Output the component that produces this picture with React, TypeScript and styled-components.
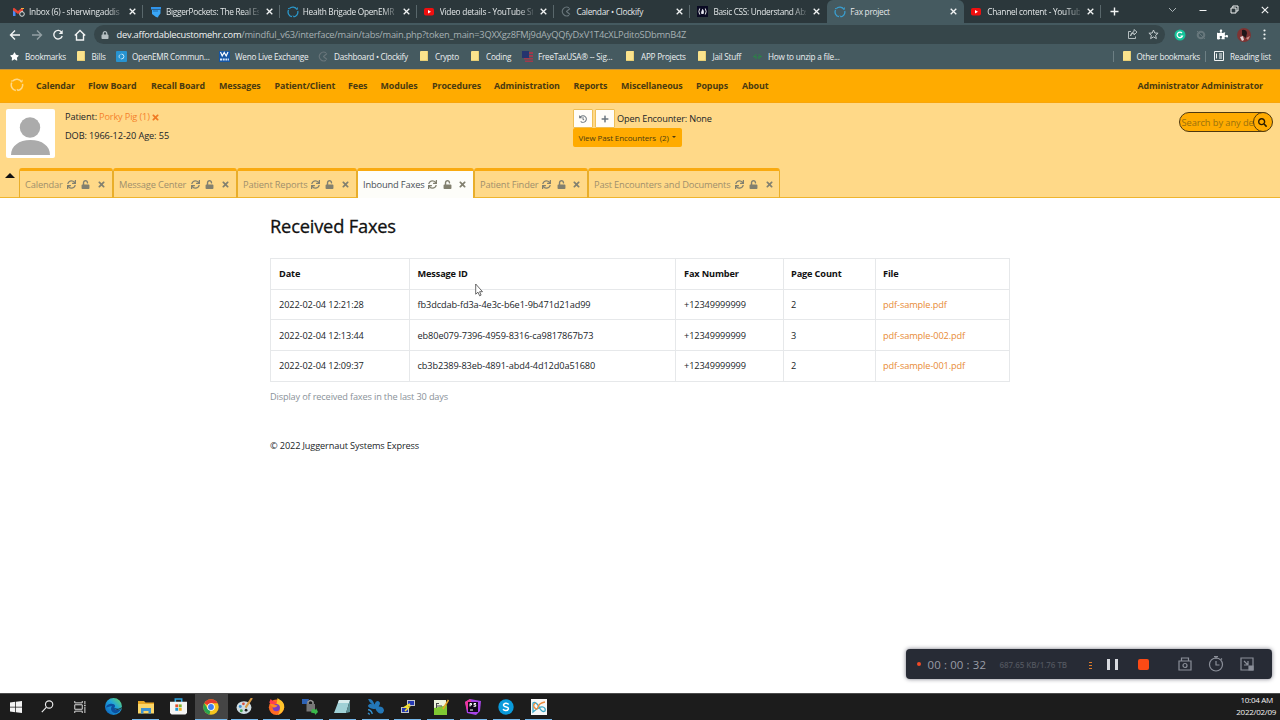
import React from "react";
import styled, { createGlobalStyle, css } from "styled-components";
import { FaHistory, FaPlus, FaSearch, FaSync, FaTimes, FaUnlock, FaStar, FaPuzzlePiece, FaLock } from "react-icons/fa";

const Global = createGlobalStyle`
  * { box-sizing: border-box; }
  html, body { margin: 0; overflow: hidden; }
  body { font-family: "Open Sans", "Noto Sans", sans-serif; font-size: 9.2px; color: #212529; background: #fff; }
  svg { display: block; flex: none; }
`;

const Screen = styled.div`
  width: 1280px;
  height: 720px;
  display: flex;
  flex-direction: column;
  position: relative;
  overflow: hidden;
`;

/* ---------- browser ---------- */
const TabStrip = styled.div`
  height: 23px;
  background: #2b373b;
  display: flex;
  padding-left: 6px;
  flex: none;
`;
const BrowserTab = styled.div<{ $active?: boolean; $sep?: boolean }>`
  width: 136.9px;
  height: 23px;
  padding: 0 7px 0 7px;
  display: flex;
  align-items: center;
  flex: none;
  color: #e4e8e9;
  font-size: 8.3px;
  ${(p) => p.$active && css`background: #455a60; border-radius: 6px 6px 0 0;`}
  ${(p) => p.$sep && css`
    background: linear-gradient(#59676b, #59676b) right center / 1px 13px no-repeat;
  `}
`;
const Favicon = styled.span`
  width: 16px;
  flex: none;
  display: flex;
`;
const TabTitle = styled.span<{ $ls?: number; $fade?: boolean }>`
  flex: 1;
  min-width: 0;
  white-space: nowrap;
  margin-right: 7px;
  letter-spacing: ${(p) => p.$ls ?? -0.28}px;
  ${(p) => p.$fade && css`mask-image: linear-gradient(90deg, #000 84%, transparent 104%);`}
`;
const StripEnd = styled.div`
  flex: 1;
  display: flex;
  align-items: center;
  padding-left: 9px;
`;
const WindowButtons = styled.div`
  margin-left: auto;
  display: flex;
  align-items: center;
  gap: 22.5px;
  padding: 0 11px 4px 0;
`;
const Toolbar = styled.div`
  height: 23px;
  background: #455a60;
  display: flex;
  align-items: center;
  flex: none;
  padding-left: 9px;
`;
const NavIcons = styled.div`
  display: flex;
  gap: 9.5px;
  width: 85px;
`;
const Address = styled.div`
  width: 1071px;
  height: 19px;
  border-radius: 10px;
  background: #36464a;
  display: flex;
  align-items: center;
  padding: 0 6px 0 7px;
  font-size: 9.3px;
  color: #a6b1b4;
`;
const Url = styled.span`
  margin-left: 7.5px;
  letter-spacing: -0.225px;
  flex: 1;
  white-space: nowrap;
  b { font-weight: 400; color: #f2f4f4; }
`;
const AddressIcons = styled.div`
  display: flex;
  gap: 10.5px;
`;
const Extensions = styled.div`
  display: flex;
  align-items: center;
  gap: 9.3px;
  margin-left: 9px;
  svg:last-child { margin-left: 3px; }
`;
const BookmarkBar = styled.div`
  height: 23px;
  background: #455a60;
  display: flex;
  align-items: center;
  flex: none;
  padding: 0 0 3px 10px;
`;
const Bookmark = styled.div<{ $w: number; $gap?: number }>`
  width: ${(p) => p.$w}px;
  display: flex;
  align-items: center;
  flex: none;
  gap: ${(p) => p.$gap ?? 6}px;
  font-size: 8.2px;
  letter-spacing: -0.25px;
  white-space: nowrap;
  color: #eceff0;
`;
const BookmarkEnd = styled.div`
  margin-left: auto;
  display: flex;
`;
const Divider = styled.span`
  width: 1px;
  height: 11px;
  background: #6d7f84;
  margin-right: 8px;
  align-self: center;
`;
const Folder = styled.span`
  width: 8px;
  height: 10px;
  margin: 0 1px;
  flex: none;
  border-radius: 1px;
  background: #fbe38c;
  box-shadow: inset -1px -1px 0 #e9cf74;
`;

/* ---------- application ---------- */
const MainNav = styled.nav`
  height: 34px;
  background: #ffab00;
  border-top: 1px solid #c8953a;
  border-bottom: 1px solid #f9a50a;
  display: flex;
  align-items: center;
  flex: none;
  padding: 0 0 1.5px 10px;
  font-weight: 700;
  font-size: 8.9px;
  color: #4a3a10;
`;
const NavItem = styled.span<{ $w: number }>`
  width: ${(p) => p.$w}px;
  letter-spacing: -0.1px;
  white-space: nowrap;
`;
const UserName = styled.span`
  margin-left: auto;
  margin-right: 17px;
  letter-spacing: -0.08px;
`;
const PatientHeader = styled.header`
  height: 65px;
  background: #ffd988;
  display: flex;
  flex: none;
  padding: 6px 8px 0 6px;
`;
const Avatar = styled.div`
  width: 49px;
  height: 49px;
  flex: none;
  background: #fff;
  border-radius: 2px;
`;
const PatientInfo = styled.div`
  width: 517.5px;
  flex: none;
  padding: 1px 0 0 10px;
  font-size: 9.2px;
  letter-spacing: -0.09px;
  div { height: 19px; line-height: 14px; display: flex; align-items: center; padding-bottom: 5px; }
  a { color: #f5822b; margin: 0 1.5px 0 2px; letter-spacing: -0.14px; }
`;
const Encounter = styled.div`
  width: 606px;
  flex: none;
`;
const EncounterRow = styled.div`
  display: flex;
  align-items: center;
  font-size: 9.2px;
  letter-spacing: -0.17px;
`;
const SquareButton = styled.span`
  width: 20px;
  height: 19px;
  margin-right: 2.3px;
  background: #fffdf8;
  border: 1px solid #efbf55;
  border-radius: 1px;
  display: flex;
  align-items: center;
  justify-content: center;
  color: #6c757d;
`;
const PastButton = styled.span`
  width: 109px;
  height: 19px;
  background: #ffab00;
  border-radius: 2px;
  display: flex;
  align-items: center;
  padding: 0 0 1px 6px;
  font-size: 8px;
  letter-spacing: -0.12px;
  color: #4d3b10;
  white-space: pre;
`;
const Caret = styled.i`
  border: 2px solid transparent;
  border-top-color: #4d3b10;
  border-bottom: 0;
  margin-left: 3px;
`;
const SearchBox = styled.div`
  width: 93px;
  height: 20px;
  flex: none;
  margin-top: 3px;
  border: 1px solid #4d3810;
  border-radius: 10px;
  background: #ffab00;
  display: flex;
  align-items: center;
  font-size: 9.3px;
  color: #98700e;
  white-space: nowrap;
  padding-left: 2px;
  span { width: 71px; letter-spacing: -0.08px; }
`;
const SearchButton = styled.div`
  width: 20px;
  height: 20px;
  border: 1px solid #4d3810;
  border-radius: 50%;
  background: #ffab00;
  color: #2a1d00;
  display: flex;
  align-items: center;
  justify-content: center;
  flex: none;
`;
const AppTabs = styled.div`
  height: 30px;
  background: #ffd988;
  display: flex;
  flex: none;
  box-shadow: inset 0 -1px 0 #efb52e;
`;
const CollapseCell = styled.div`
  width: 19px;
  padding: 5px 0 0 5px;
`;
const AppTab = styled.div<{ $w: number; $active?: boolean }>`
  width: ${(p) => p.$w}px;
  height: 30px;
  border-top: 3px solid #f9aa10;
  border-right: 1px solid #e9ae2a;
  border-left: 1px solid #e9ae2a;
  border-radius: 3px 3px 0 0;
  display: flex;
  align-items: center;
  padding: 0 0 1px 5px;
  font-size: 9.3px;
  white-space: nowrap;
  color: ${(p) => (p.$active ? "#495057" : "#a08f6c")};
  background: ${(p) => (p.$active ? "#fdfdf9" : "transparent")};
`;
const AppTabTitle = styled.span<{ $w: number }>`
  width: ${(p) => p.$w}px;
  letter-spacing: -0.16px;
`;
const AppTabIcons = styled.span`
  display: flex;
  align-items: center;
  color: #82806f;
  gap: 5.5px;
  svg:last-child { margin-left: 1px; }
`;
const Content = styled.main`
  width: 740px;
  margin: 0 auto;
  flex: 1;
`;
const Title = styled.h2`
  margin: 14px 0 19px;
  font-size: 18.3px;
  line-height: 27px;
  font-weight: 500;
  letter-spacing: -0.2px;
  color: #111;
  -webkit-text-stroke: 0.3px #111;
`;
const Table = styled.table`
  width: 740px;
  border-collapse: collapse;
  table-layout: fixed;
  th, td { border: 1px solid #e6e8ea; height: 30.67px; padding: 0 8px; text-align: left; font-size: 9.2px; }
  th { color: #111; letter-spacing: -0.14px; }
  th:nth-child(n + 4), td:nth-child(n + 4) { padding-left: 7.5px; }
`;
const DateCol = styled.col`width: 138.500px;`;
const IdCol = styled.col`width: 266.500px;`;
const NumberCol = styled.col`width: 107.500px;`;
const PagesCol = styled.col`width: 92px;`;
const Cell = styled.td`
  letter-spacing: -0.1px;
`;
const FileLink = styled.a`
  color: #e88b35;
`;
const Note = styled.p`
  margin: 8px 0 36px;
  line-height: 13px;
  letter-spacing: -0.15px;
  color: #8a9299;
`;
const Copyright = styled.p`
  margin: 0;
  line-height: 13px;
  letter-spacing: -0.13px;
`;

/* ---------- desktop ---------- */
const Taskbar = styled.footer`
  height: 27px;
  background: #1c1c1c;
  border-top: 1px solid #4c4c4c;
  display: flex;
  flex: none;
`;
const TaskCell = styled.div<{ $first?: boolean; $open?: boolean; $active?: boolean }>`
  width: ${(p) => (p.$first ? 31.3 : 32.76)}px;
  height: 26px;
  display: flex;
  align-items: center;
  justify-content: center;
  border-bottom: 1px solid transparent;
  background:
    ${(p) => (p.$open ? `linear-gradient(#76b9ed, #76b9ed) center bottom / ${p.$active ? 32 : 27}px 1px no-repeat border-box,` : "")}
    ${(p) => (p.$active ? "#454545" : "transparent")};
`;
const Clock = styled.div`
  margin-left: auto;
  width: 54px;
  padding: 0 4px 0 0;
  text-align: right;
  font-size: 8px;
  line-height: 12px;
  letter-spacing: -0.28px;
  color: #f1f1f1;
  div:first-child { padding-right: 3px; }
`;
const Recorder = styled.div`
  position: absolute;
  left: 906px;
  top: 649px;
  width: 366px;
  height: 30px;
  border-radius: 4px;
  background: #272b35;
  box-shadow: 0 0 4px rgba(30, 30, 50, 0.6);
  display: flex;
  align-items: center;
  padding-left: 11px;
  color: #9a9da6;
`;
const RecDot = styled.i`
  width: 4px;
  height: 4px;
  border-radius: 50%;
  background: #f24a26;
  margin-right: 6.5px;
`;
const RecTime = styled.span`
  width: 72px;
  font-size: 11.4px;
  letter-spacing: 0.15px;
  white-space: nowrap;
`;
const RecSize = styled.span`
  width: 89px;
  font-size: 8px;
  font-weight: 600;
  letter-spacing: -0.05px;
  color: #50545d;
  white-space: nowrap;
`;
const Levels = styled.i`
  width: 3px;
  height: 8px;
  margin: 3px 15px 0 0;
  background: repeating-linear-gradient(#e07b2a 0 1px, transparent 1px 3px);
`;
const Pause = styled.i`
  width: 11px;
  height: 11px;
  border: solid #d9dbe0;
  border-width: 0 3px;
  margin-right: 20px;
`;
const Stop = styled.i`
  width: 11px;
  height: 11px;
  border-radius: 2px;
  background: #fc4a15;
  margin-right: 28px;
`;
const RecIcons = styled.div`
  display: flex;
  gap: 15px;
`;
const Pointer = styled.svg`
  position: absolute;
  left: 475px;
  top: 283px;
`;

/* ---------- icons ---------- */
const Gmail = () => (
  <svg width="12" height="10" viewBox="0 0 12 10">
    <path d="M0 1.5V9h2.500V4z" fill="#4a8af4" /><path d="M7.500 4v5H10V1.500z" fill="#c5c8c8" />
    <path d="M0 1.500L1 .8 5 4 9 .8l1 .7v2L5 7 0 3.500z" fill="#e74435" />
    <circle cx="9" cy="7" r="2.300" fill="#2b373b" stroke="#d9dede" /><path d="M8 1.500h3" stroke="#f4ab40" />
  </svg>
);
const Pockets = () => (
  <svg width="12" height="12" viewBox="0 0 12 12"><path d="M1 1h10v2.500H1z" fill="#2f93ea" /><path d="M2 4h8.500v3.500L8.500 10 8 11.500 6 11 2 8z" fill="#3aa6f6" /><path d="M3 5h5" stroke="#1b6bb0" /></svg>
);
const Ring = ({ size = 12, color = "#2b98cb" }: { size?: number; color?: string }) => (
  <svg width={size} height={size} viewBox="0 0 12 12" fill="none" stroke={color} strokeWidth="1.300">
    <path d="M2.300 2.600A4.800 4.800 0 0 1 10 3.500" /><path d="M10.800 5A4.800 4.800 0 0 1 6.600 10.800" /><path d="M5 10.700A4.800 4.800 0 0 1 1.500 4" />
    <path d="M10.500 1.500L10 3.800M1 2.500l1.300.3M6 9.500l.8 1.300" strokeWidth="1" />
  </svg>
);
const Youtube = () => (
  <svg width="11" height="10" viewBox="0 0 11 10"><rect y="1" width="10" height="7.500" rx="1.800" fill="#f00f0f" /><path d="M4 3l3 1.700-3 1.700z" fill="#fff" /></svg>
);
const Clockify = () => (
  <svg width="11" height="11" viewBox="0 0 11 11" fill="none" stroke="#68757a" strokeWidth="1.100"><path d="M8 1.700A4.400 4.400 0 1 0 8 9.300" /><path d="M5.500 5.500L9 2.500M5.500 5.500L9 8.500M5 5.500h1.500" /></svg>
);
const CampIcon = () => (
  <svg width="11" height="11" viewBox="0 0 11 11"><rect width="11" height="11" fill="#0a0a23" /><path d="M2.700 2.500q-1.700 3 0 6M8.300 2.500q1.700 3 0 6" stroke="#fff" fill="none" strokeWidth=".9" /><path d="M5.500 2.800C7.500 5 7 7 6.500 8h-2C3.500 6.500 4.500 5.500 5.500 2.800z" fill="#e5e5ee" /></svg>
);
const Cross = ({ s = 7, w = 1.3, c = "#f2f4f4" }) => (
  <svg width={s} height={s} viewBox="0 0 7 7"><path d="M.7.7l5.600 5.600M6.300.7L.7 6.300" stroke={c} strokeWidth={w} /></svg>
);
const line = { fill: "none", stroke: "#f2f4f4", strokeWidth: 1.4 };

const tabs: { icon: React.ReactNode; title: string; sep?: boolean; active?: boolean; fade?: boolean; ls?: number }[] = [
  { icon: <Gmail />, title: "Inbox (6) - sherwingaddis", sep: true, fade: true, ls: -0.25 },
  { icon: <Pockets />, title: "BiggerPockets: The Real Es", sep: true, fade: true, ls: -0.3 },
  { icon: <Ring />, title: "Health Brigade OpenEMR", sep: true, fade: true, ls: -0.3 },
  { icon: <Youtube />, title: "Video details - YouTube St", sep: true, fade: true, ls: -0.22 },
  { icon: <Clockify />, title: "Calendar • Clockify", sep: true },
  { icon: <CampIcon />, title: "Basic CSS: Understand Abs", fade: true, ls: -0.32 },
  { icon: <Ring color="#3a9fd0" />, title: "Fax project", active: true },
  { icon: <Youtube />, title: "Channel content - YouTub", sep: true, fade: true, ls: -0.28 },
];

const marks: { w: number; label: string; icon: React.ReactNode; gap?: number }[] = [
  { w: 66, label: "Bookmarks", icon: <FaStar size={9} color="#fff" />, gap: 6 },
  { w: 40, label: "Bills", icon: <Folder />, gap: 5.5 },
  { w: 103, label: "OpenEMR Commun...", gap: 5,
    icon: <svg width="11" height="11" viewBox="0 0 11 11"><rect width="11" height="11" rx="1" fill="#2793d0" /><circle cx="5.500" cy="5.500" r="2.400" fill="none" stroke="#c9e8f8" strokeDasharray="4 1" /></svg> },
  { w: 99, label: "Weno Live Exchange", gap: 5,
    icon: <svg width="11" height="11" viewBox="0 0 11 11"><rect width="11" height="11" fill="#1656a4" /><path d="M1.500 1l1.700 4 2-3.500 2 3.500L9 1" fill="none" stroke="#fff" strokeWidth="1.200" /><path d="M1 8.500h9" stroke="#d8e8ff" strokeWidth="2" strokeDasharray="2 .7" /></svg> },
  { w: 101, label: "Dashboard • Clockify", icon: <Clockify />, gap: 5 },
  { w: 51, label: "Crypto", icon: <Folder /> },
  { w: 52, label: "Coding", icon: <Folder /> },
  { w: 103, label: "FreeTaxUSA® -- Sig...", gap: 5,
    icon: <svg width="11" height="11" viewBox="0 0 11 11"><path d="M0 0h7v7H0z" fill="#25346e" /><path d="M7 1h4v2H7zM7 4h4v2H7zM2 7h9v1.500H2zM3 9.500h8V11H3z" fill="#a0394c" /></svg> },
  { w: 71.5, label: "APP Projects", icon: <Folder /> },
  { w: 55.5, label: "Jail Stuff", icon: <Folder /> },
  { w: 100, label: "How to unzip a file...", gap: 5,
    icon: <svg width="11" height="7" viewBox="0 0 11 7" fill="none" stroke="#2f7d4a"><path d="M4.500 1.500a2 2 0 1 0 0 4V3.500H1M6.500 1.500a2 2 0 1 1 0 4V3.500H10" /></svg> },
];

const nav: [string, number][] = [
  ["Calendar", 52], ["Flow Board", 63], ["Recall Board", 68], ["Messages", 55.5], ["Patient/Client", 73.5],
  ["Fees", 32.5], ["Modules", 51.5], ["Procedures", 62], ["Administration", 79.5], ["Reports", 47.5],
  ["Miscellaneous", 75], ["Popups", 46], ["About", 40],
];

const appTabs: { label: string; w: number; t: number; active?: boolean }[] = [
  { label: "Calendar", w: 94, t: 41.5 },
  { label: "Message Center", w: 124, t: 71.5 },
  { label: "Patient Reports", w: 120, t: 67.5 },
  { label: "Inbound Faxes", w: 117, t: 65, active: true },
  { label: "Patient Finder", w: 114, t: 62 },
  { label: "Past Encounters and Documents", w: 192, t: 140.5 },
];

const faxes = [
  ["2022-02-04 12:21:28", "fb3dcdab-fd3a-4e3c-b6e1-9b471d21ad99", "+12349999999", "2", "pdf-sample.pdf"],
  ["2022-02-04 12:13:44", "eb80e079-7396-4959-8316-ca9817867b73", "+12349999999", "3", "pdf-sample-002.pdf"],
  ["2022-02-04 12:09:37", "cb3b2389-83eb-4891-abd4-4d12d0a51680", "+12349999999", "2", "pdf-sample-001.pdf"],
];

const V = ({ s = 16, children }: { s?: number; children: React.ReactNode }) => (
  <svg width={s} height={s} viewBox="0 0 16 16">{children}</svg>
);

const tasks: { icon: React.ReactNode; open?: boolean; active?: boolean }[] = [
  { icon: <V s={12}><path d="M0 2l7-1v6.500H0zM8 .9L16 0v7.500H8zM0 8.500h7V15l-7-1zM8 8.500h8V16l-8-1z" fill="#f3f3f3" /></V> },
  { icon: <V s={13}><g fill="none" stroke="#eee" strokeWidth="1.400"><circle cx="10" cy="5.500" r="4.500" /><path d="M6.500 9L1 15" /></g></V> },
  { icon: <V s={12}><g fill="none" stroke="#ddd" strokeWidth="1.300"><path d="M1 0v2.500h10V0M1 16v-2.500h10V16M1 5h10v6H1zM14.500 0v4M14.500 8v8" /><path d="M13.500 6h2" strokeWidth="2" /></g></V> },
  { icon: <V s={17}><defs><linearGradient id="edge" x1="0" y1="1" x2="1" y2="0"><stop offset="0" stopColor="#0b5cb8" /><stop offset=".55" stopColor="#1fa4df" /><stop offset="1" stopColor="#6ddc5a" /></linearGradient></defs><circle cx="8" cy="8" r="8" fill="url(#edge)" /><path d="M1 9c.5-4 8-5 8.500-1.500C9 9 8.500 9 9 10c1 1.500 4 1.500 6.300 0-1.300 3-4.300 4.500-6.300 4.200C5.500 13 5 10 6.500 7.500" fill="#0c4f9e" /><path d="M8.500 9.500c2 2.500 5 1.500 7 .2L16 8c0-1 0-1 0 0-1 2-5 3-7.500 1.500z" fill="#1c1c1c" /></V> },
  { icon: <V><path d="M0 2h6l1.500 1.500H16V14H0z" fill="#e9a825" /><path d="M0 5h16v9.500H0z" fill="#fbd668" /><path d="M3 9h10v5.500h-2.500V12h-5v2.500H3z" fill="#3f93d2" /></V>, open: true },
  { icon: <V s={17}><path d="M5 4V1h6v3" fill="none" stroke="#2ba4e0" strokeWidth="1.500" /><path d="M0 3.500h16V14l-1.500 1.500h-13L0 14z" fill="#f4f4f4" /><path d="M5 6h2.700v2.700H5z" fill="#e8502a" /><path d="M8.300 6H11v2.700H8.300z" fill="#7db52a" /><path d="M5 9.300h2.700V12H5z" fill="#1b98d8" /><path d="M8.300 9.300H11V12H8.300z" fill="#f3ae1b" /></V> },
  { icon: <V><circle cx="8" cy="8" r="7.700" fill="#f6c41c" /><path d="M8 8L1.300 4.200A7.700 7.700 0 0 1 14.700 4.200H8z" fill="#e33b2e" /><path d="M8 8l-1.500 7.600A7.700 7.700 0 0 1 1.300 4.200l3.500 5.700z" fill="#2aa44f" /><circle cx="8" cy="8" r="3.800" fill="#fff" /><circle cx="8" cy="8" r="2.900" fill="#3d7ff0" /></V>, open: true, active: true },
  { icon: <V s={17}><ellipse cx="7.500" cy="9" rx="7" ry="6" fill="#cfdce2" /><circle cx="4" cy="8" r="1.400" fill="#3c8fd0" /><circle cx="7" cy="5.500" r="1.300" fill="#d84d3a" /><circle cx="5" cy="12" r="1.400" fill="#45a552" /><circle cx="9.500" cy="11.500" r="1.300" fill="#1c1c1c" /><path d="M15 0L9 9" stroke="#d89a43" strokeWidth="2" /></V>, open: true },
  { icon: <V s={17}><circle cx="8" cy="8.700" r="7.200" fill="#ff6b22" /><path d="M9 0c2 2 6.500 3 6.300 8.500C15 12 12 15 9 16c4-5 2-9-1-10z" fill="#ffc32b" /><path d="M1 4c1-1 1-2 1.500-3C4 3 6 3 8 4.500L5 7z" fill="#ff3f50" /><circle cx="7.800" cy="9" r="3.400" fill="#7a3cc8" /><path d="M2 6c3-1 5 1 7 1-1 2-3 2-4 2z" fill="#ff8c22" /></V>, open: true },
  { icon: <V><path d="M0 0h7l-2 5H0z" fill="#2d62b5" /><path d="M6 6V3q2.500-3 5 0v3" stroke="#999" fill="none" strokeWidth="1.500" /><path d="M4.500 5h8.500v7.500H4.500z" fill="#767676" /><path d="M10 10l4 .5V9l2 4-3 3v-1.500l-4-1z" fill="#3ab84a" /></V>, open: true },
  { icon: <V><path d="M5 1h11l-4 13H0z" fill="#9fd0d6" /><path d="M5 1h11l-1 3H4z" fill="#d8ecee" /><path d="M12 14l4-13v12z" fill="#5d9299" /></V>, open: true },
  { icon: <V s={17}><path d="M1 1q4-1 6 5 2-5 5-2 1 2-1 4 5 0 5 4-1 4-5 2-2-1-3-4-3 1-6-1-2-2 0-3 1-1 3 0Q2 4 1 1z" fill="#2377b8" /><path d="M1 11q3 0 4 4M1 14l1.500 1.500" stroke="#3796d6" fill="none" strokeWidth="1.300" /></V>, open: true },
  { icon: <V><rect x="7" y="1" width="8" height="6" fill="#c2c6cc" /><rect x="8" y="2" width="6" height="4" fill="#2438b4" /><rect x="1" y="8" width="8" height="6" fill="#c2c6cc" /><rect x="2" y="9" width="6" height="4" fill="#2438b4" /><path d="M10 5L5 8l4 0-4 4" fill="none" stroke="#f4e02a" strokeWidth="1.500" /></V>, open: true },
  { icon: <V><path d="M1 1h12v15H1z" fill="#eef4dd" /><path d="M1 9q6-1 13-3v10H1z" fill="#7fc832" /><path d="M3 4.500h3M3 7h6M3.500 4v5" stroke="#444" /><path d="M15.500 1L10 10" stroke="#e3a528" strokeWidth="1.700" /></V>, open: true },
  { icon: <V><path d="M0 3l5-3 11 2-1 10-4 4-9-2z" fill="#a844e8" /><path d="M0 3l5-3 2 5-5 6z" fill="#f0369b" /><path d="M3 3h10v10H3z" fill="#100818" /><path d="M5 7.500v-3h1.500v1.500H5M11 4.500H9v1.300h1.700v1.500H8.500M5 11h3" fill="none" stroke="#fff" /></V>, open: true },
  { icon: <V><circle cx="8" cy="8" r="7.700" fill="#0a9bdc" /><path d="M10.700 5.500Q9.500 4 7.500 4.300 5.300 5 5.600 6.500 6 7.600 8.300 8q2.500.5 2 2.200-.8 1.600-2.800 1.400-1.700-.2-2.400-1.600" fill="none" stroke="#fff" strokeWidth="1.500" /></V>, open: true },
  { icon: <V><rect width="16" height="16" fill="#f7f7f7" /><path d="M2 4q3-2 6 4t6 4q1-3-2-4T2 13z" fill="none" stroke="#38a7c7" strokeWidth="1.300" /><path d="M14 3q-6 1-7 5T3 8q-1-3 2-4" fill="none" stroke="#ed8b3b" strokeWidth="1.300" /></V>, open: true },
];

export default function App() {
  return (
    <Screen>
      <Global />
      <TabStrip>
        {tabs.map((t) => (
          <BrowserTab key={t.title} $active={t.active} $sep={t.sep}>
            <Favicon>{t.icon}</Favicon>
            <TabTitle $fade={t.fade} $ls={t.ls}>{t.title}</TabTitle>
            <Cross />
          </BrowserTab>
        ))}
        <StripEnd>
          <svg width="9" height="9" viewBox="0 0 9 9"><path d="M4.500.5v8M.5 4.500h8" {...line} /></svg>
          <WindowButtons>
            <svg width="9" height="6" viewBox="0 0 9 6"><path d="M1 1l3.500 3.500L8 1" {...line} strokeWidth=".9" stroke="#b9c2c4" /></svg>
            <svg width="8" height="8" viewBox="0 0 8 8"><path d="M.5 4.500h7" {...line} strokeWidth="1" /></svg>
            <svg width="9" height="9" viewBox="0 0 9 9"><path d="M1 3h5v5H1zM2.800 2.800V1H8v5H6.200" {...line} strokeWidth="1" /></svg>
            <Cross s={8} w={1} />
          </WindowButtons>
        </StripEnd>
      </TabStrip>
      <Toolbar>
        <NavIcons>
          <svg width="12" height="12" viewBox="0 0 12 12"><path d="M11 6H1.500M6 1.500L1.500 6 6 10.500" {...line} /></svg>
          <svg width="12" height="12" viewBox="0 0 12 12"><path d="M1 6h9.500M6 1.500L10.500 6 6 10.500" {...line} stroke="#93a0a4" /></svg>
          <svg width="12" height="12" viewBox="0 0 12 12"><path d="M9.700 3.300A4.300 4.300 0 1 0 10.200 7" {...line} /><path d="M10.700 1v4h-4z" fill="#f2f4f4" /></svg>
          <svg width="12" height="12" viewBox="0 0 12 12"><path d="M.8 6.500L6 1.500l5.200 5M2.500 5.500V11h7V5.500" {...line} /></svg>
        </NavIcons>
        <Address>
          <FaLock size={8} color="#b5bfc2" />
          <Url><b>dev.affordablecustomehr.com</b>/mindful_v63/interface/main/tabs/main.php?token_main=3QXXgz8FMj9dAyQQfyDxV1T4cXLPditoSDbmnB4Z</Url>
          <AddressIcons>
            <svg width="11" height="11" viewBox="0 0 11 11"><path d="M4 2.500H1.500V9.500H8.500V7.500M3.500 7Q4 4 7 4V6l3-3-3-2.500V2.500Q4 3 3.500 7z" {...line} strokeWidth=".9" stroke="#c3cbcd" /></svg>
            <svg width="11" height="11" viewBox="0 0 11 11"><path d="M5.500 1l1.300 3 3.300.2L7.600 6.400l.8 3.200-2.900-1.700-2.900 1.700.8-3.200L.9 4.200 4.200 4z" {...line} strokeWidth="1" stroke="#c3cbcd" /></svg>
          </AddressIcons>
        </Address>
        <Extensions>
          <svg width="12" height="12" viewBox="0 0 12 12"><circle cx="6" cy="6" r="5.500" fill="#15c39a" /><path d="M8 4A2.800 2.800 0 1 0 8.500 7H6.500" fill="none" stroke="#fff" strokeWidth="1.200" /></svg>
          <svg width="12" height="12" viewBox="0 0 12 12"><circle cx="6" cy="6" r="3.300" fill="none" stroke="#67777c" strokeWidth="2" /><path d="M2 2l8 8" stroke="#67777c" /></svg>
          <FaPuzzlePiece size={11} color="#fff" />
          <svg width="14" height="14" viewBox="0 0 14 14"><circle cx="7" cy="7" r="7" fill="#7e3433" /><path d="M5 2q4-1 5 3l-1 5-4-3z" fill="#1f1719" /><path d="M3 9l3-1 1 4-2 1z" fill="#e9d6d6" /><path d="M9 10l4-2-2 4z" fill="#c98c84" /></svg>
          <svg width="4" height="11" viewBox="0 0 4 11" fill="#f2f4f4"><circle cx="1.500" cy="1.500" r="1.100" /><circle cx="1.500" cy="5.500" r="1.100" /><circle cx="1.500" cy="9.500" r="1.100" /></svg>
        </Extensions>
      </Toolbar>
      <BookmarkBar>
        {marks.map((m) => (
          <Bookmark key={m.label} $w={m.w} $gap={m.gap}>{m.icon}{m.label}</Bookmark>
        ))}
        <BookmarkEnd>
          <Divider />
          <Bookmark $w={83} $gap={4.5}><Folder />Other bookmarks</Bookmark>
          <Divider />
          <Bookmark $w={66} $gap={6}>
            <svg width="10" height="10" viewBox="0 0 10 10"><path d="M.5.5h9v9h-9z" {...line} strokeWidth="1" /><path d="M2.500 2.500v5M5 3h3M5 5h3M5 7h3" {...line} strokeWidth="1" /></svg>
            Reading list
          </Bookmark>
        </BookmarkEnd>
      </BookmarkBar>
      <MainNav>
        <NavItem $w={26}><Ring size={14} color="#ffd988" /></NavItem>
        {nav.map(([label, w]) => <NavItem key={label} $w={w}>{label}</NavItem>)}
        <UserName>Administrator Administrator</UserName>
      </MainNav>
      <PatientHeader>
        <Avatar>
          <svg width="49" height="49" viewBox="0 0 49 49" fill="#ababab"><circle cx="24" cy="18.500" r="10.200" /><path d="M5 46c0-9 8-15 19.500-15S44 37 44 46z" /></svg>
        </Avatar>
        <PatientInfo>
          <div>Patient: <a>Porky Pig (1)</a> <FaTimes size={9} color="#f07a22" /></div>
          <div>DOB: 1966-12-20 Age: 55</div>
        </PatientInfo>
        <Encounter>
          <EncounterRow>
            <SquareButton><FaHistory size={8} /></SquareButton>
            <SquareButton><FaPlus size={8} /></SquareButton>
            Open Encounter: None
          </EncounterRow>
          <PastButton>{"View Past Encounters  (2)"}<Caret /></PastButton>
        </Encounter>
        <SearchBox>
          <span>Search by any de</span>
          <SearchButton><FaSearch size={9} /></SearchButton>
        </SearchBox>
      </PatientHeader>
      <AppTabs>
        <CollapseCell><svg width="10" height="6" viewBox="0 0 10 6"><path d="M0 5L5 0l5 5z" fill="#111" /></svg></CollapseCell>
        {appTabs.map((t) => (
          <AppTab key={t.label} $w={t.w} $active={t.active}>
            <AppTabTitle $w={t.t}>{t.label}</AppTabTitle>
            <AppTabIcons><FaSync size={9} /><FaUnlock size={9} /><FaTimes size={9} /></AppTabIcons>
          </AppTab>
        ))}
      </AppTabs>
      <Content>
        <Title>Received Faxes</Title>
        <Table>
          <colgroup><DateCol /><IdCol /><NumberCol /><PagesCol /><col /></colgroup>
          <thead><tr><th>Date</th><th>Message ID</th><th>Fax Number</th><th>Page Count</th><th>File</th></tr></thead>
          <tbody>
            {faxes.map(([date, id, num, pages, file]) => (
              <tr key={id}><Cell>{date}</Cell><Cell>{id}</Cell><Cell>{num}</Cell><Cell>{pages}</Cell><Cell><FileLink>{file}</FileLink></Cell></tr>
            ))}
          </tbody>
        </Table>
        <Note>Display of received faxes in the last 30 days</Note>
        <Copyright>© 2022 Juggernaut Systems Express</Copyright>
      </Content>
      <Taskbar>
        {tasks.map((t, i) => <TaskCell key={i} $first={i === 0} $open={t.open} $active={t.active}>{t.icon}</TaskCell>)}
        <Clock><div>10:04 AM</div><div>2022/02/09</div></Clock>
      </Taskbar>
      <Recorder>
        <RecDot />
        <RecTime>00 : 00 : 32</RecTime>
        <RecSize>687.65 KB/1.76 TB</RecSize>
        <Levels /><Pause /><Stop />
        <RecIcons>
          <svg width="16" height="16" viewBox="0 0 16 16" fill="none" stroke="#8b8f99" strokeWidth="1.200"><path d="M2 5h12v9H2zM4.500 5V2h7v3" /><circle cx="8" cy="9.500" r="2" /></svg>
          <svg width="16" height="16" viewBox="0 0 16 16" fill="none" stroke="#8b8f99" strokeWidth="1.200"><circle cx="8" cy="8.500" r="6.500" /><path d="M8 5v4h3.500M6 .7h4M8 1v2M13 2.500l1 1" /></svg>
          <svg width="16" height="16" viewBox="0 0 16 16" fill="none" stroke="#8b8f99" strokeWidth="1.200"><path d="M2 2h12v12H2zM5 5l3.500 3.500M5 9h4V5" /><path d="M10 10h4v4h-4z" fill="#8b8f99" /></svg>
        </RecIcons>
      </Recorder>
      <Pointer width="8" height="14" viewBox="0 0 8 14"><path d="M.7 1v10.200l2.300-2 1.600 3.600 1.500-.7-1.500-3.400h2.900z" fill="#fff" stroke="#444" strokeWidth=".8" /></Pointer>
    </Screen>
  );
}
